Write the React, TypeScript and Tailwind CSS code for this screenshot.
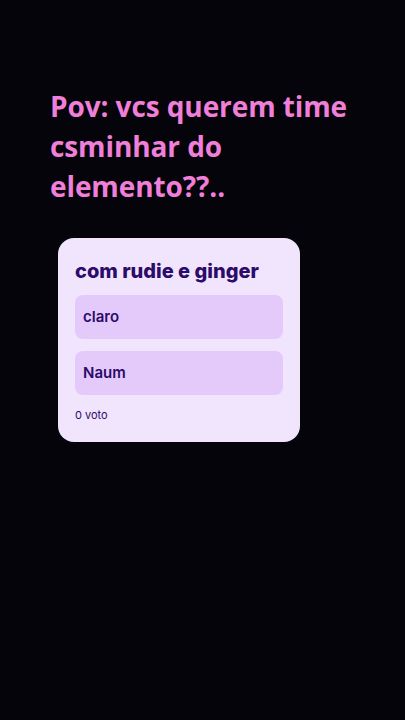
import React from 'react';

const options = ['claro', 'Naum'];

export default function App() {
  return (
    <div className="min-h-[720px] w-full bg-[#05040a] pt-[86px]" style={{ fontFamily: '"Open Sans", "Noto Sans", sans-serif' }}>
      <h1 className="pl-[50px] pr-4 text-[28px] font-bold leading-[40px] tracking-[-0.1px] text-[#ef7fd8]">
        Pov: vcs querem time
        <br />
        csminhar do
        <br />
        elemento??..
      </h1>

      <div
        className="ml-[58px] mt-[32px] w-[242px] rounded-[16px] bg-[#f1e4fd] px-[17px] pb-[19px] pt-[19px]"
        style={{ fontFamily: 'Inter, "Noto Sans", sans-serif' }}
      >
        <div className="text-[20px] font-extrabold leading-[28px] text-[#2c0b6a]">com rudie e ginger</div>
        <div className="mt-[10px] flex flex-col gap-[12px]">
          {options.map((o) => (
            <div key={o} className="flex h-[44px] items-center rounded-[8px] bg-[#e4c9fb] px-[8px] text-[15px] font-semibold text-[#2c0b6a]">
              {o}
            </div>
          ))}
        </div>
        <div className="mt-[12px] text-[11px] leading-[16px] text-[#2c0b6a]">0 voto</div>
      </div>
    </div>
  );
}
